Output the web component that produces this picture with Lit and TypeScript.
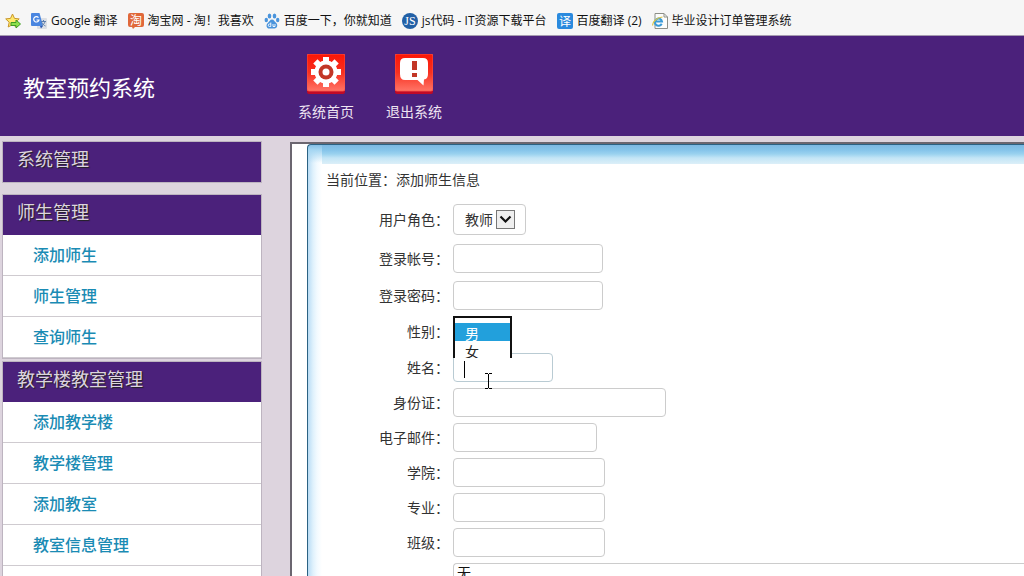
import { LitElement, html, css, svg } from "lit";
import { customElement } from "lit/decorators.js";

const bookmarks = [
  {
    text: "",
    icon: svg`<path d="M7.5 1l2 4.4 4.7.5-3.5 3.3 1 4.8-4.2-2.4L3.200 14l1-4.800L.7 5.900l4.800-.5z" fill="#ffe86a" stroke="#c9962a"/>
      <path d="M6 9.500h5V7l4.500 4-4.500 4v-2.500H6z" fill="#8ee04a" stroke="#3f9a26"/>`,
  },
  {
    text: "Google 翻译",
    icon: svg`<rect x="6" y="5" width="10" height="11" rx="1" fill="#dcdfe4"/>
      <path d="M1 0h7.500L12 13H1a1 1 0 0 1-1-1V1a1 1 0 0 1 1-1z" fill="#4a86e0"/>
      <path d="M7.500 4.600A2.700 2.700 0 1 0 8 7H5.500" fill="none" stroke="#fff" stroke-width="1.200"/>
      <path d="M10 8.500h5M12.500 7v1.500M14 8.500c-.5 2-1.500 3-3.500 4.500M11 9.500c.7 1.500 2 3 3.500 3.500" fill="none" stroke="#5d7fae"/>
      <path d="M9 13h3l-2 2.500z" fill="#2a56b0"/>`,
  },
  {
    text: "淘宝网 - 淘！我喜欢",
    icon: svg`<path d="M2 0h12a2 2 0 0 1 2 2v10a2 2 0 0 1-2 2H7l-2 2-1-2H2a2 2 0 0 1-2-2V2a2 2 0 0 1 2-2z" fill="#e0683a"/>
      <text x="8" y="11.500" font-size="12" text-anchor="middle" fill="#fff">淘</text>`,
  },
  {
    text: "百度一下，你就知道",
    icon: svg`<g fill="#4a94dc"><ellipse cx="5.500" cy="3" rx="1.800" ry="2.500"/><ellipse cx="10.500" cy="3" rx="1.800" ry="2.500"/>
      <ellipse cx="2.300" cy="7" rx="1.700" ry="2.200"/><ellipse cx="13.700" cy="7" rx="1.700" ry="2.200"/>
      <path d="M8 6.500c2 0 2.500 2 4 3.300 2.300 2 1.300 5.700-1.500 5.700-1.500 0-3.500-.2-5 0-3 .2-4-3.500-1.700-5.600C5.500 8.500 6 6.500 8 6.500z"/></g>
      <path d="M6.800 9.500v4H5.500a1.200 1.200 0 0 1 0-2.500h1.300M9 11v2.500h2V11" fill="none" stroke="#fff" stroke-width=".9"/>`,
  },
  {
    text: "js代码 - IT资源下载平台",
    icon: svg`<circle cx="8" cy="8" r="8" fill="#2260a6"/>
      <text x="8" y="12" font-size="12" text-anchor="middle" fill="#fff" font-family="Liberation Serif, serif">JS</text>`,
  },
  {
    text: "百度翻译 (2)",
    icon: svg`<rect width="16" height="16" rx="2" fill="#2a8ade"/>
      <text x="8" y="12.500" font-size="12" text-anchor="middle" fill="#fff">译</text>`,
  },
  {
    text: "毕业设计订单管理系统",
    icon: svg`<path d="M3 .5h9l3.500 3.500v11.500H3z" fill="#fdfdfb" stroke="#8d8f88"/><path d="M12 .5V4h3.500" fill="none" stroke="#8d8f88"/>
      <path d="M9.700 10.800A3.600 3.600 0 1 1 10 8.500H3" fill="none" stroke="#3a9ad8" stroke-width="2"/>
      <path d="M.8 12.500C0 10 4 4.500 10.500 4" fill="none" stroke="#d9c44a" stroke-width="1.200"/>`,
  },
];

const teeth = [0, 45, 90, 135, 180, 225, 270, 315];

const actions = [
  {
    text: "系统首页",
    glyph: svg`${teeth.map((a) => svg`<rect x="16" y="3" width="6" height="8" fill="#fff" transform="rotate(${a} 19 18)"/>`)}
      <circle cx="19" cy="18" r="9" fill="none" stroke="#fff" stroke-width="5"/>
      <circle cx="19" cy="18" r="7.500" fill="#c23626"/><circle cx="19" cy="18" r="3.500" fill="#fff"/>`,
  },
  {
    text: "退出系统",
    glyph: svg`<path d="M10 4h18q5 0 5 5v11q0 5-4 5.500l-.5 6-6-5.500H10q-5 0-5-6V9q0-5 5-5z" fill="#fff"/>
      <path d="M17 7h5v9h-5zM17 19h5v4h-5z" fill="#c23626"/>`,
  },
];

const menus = [
  { title: "系统管理", items: [] as string[] },
  { title: "师生管理", items: ["添加师生", "师生管理", "查询师生"] },
  { title: "教学楼教室管理", items: ["添加教学楼", "教学楼管理", "添加教室", "教室信息管理"] },
];

const fields = [
  { id: "idcard", label: "身份证", size: "xl" },
  { id: "email", label: "电子邮件", size: "m" },
  { id: "college", label: "学院", size: "l" },
  { id: "major", label: "专业", size: "l" },
  { id: "grade", label: "班级", size: "l" },
];

@customElement("app-root")
export class AppRoot extends LitElement {
  static styles = css`
    :host {
      display: flex;
      flex-direction: column;
      height: 100vh;
      overflow: hidden;
      background: #ddd4de;
      font: 14px/20px "Open Sans", "Noto Sans CJK SC", sans-serif;
      color: #333;
    }
    * { box-sizing: border-box; }
    a { text-decoration: none; color: inherit; }
    .bookmarks {
      flex: none;
      display: flex;
      align-items: center;
      gap: 10px;
      height: 36px;
      padding: 6px 5px 0;
      background: #f6f6f6;
      border-bottom: 1px solid #a59bb0;
      font-size: 12px;
      color: #111;
      white-space: nowrap;
    }
    .bookmark { display: flex; align-items: center; gap: 4px; }
    .bookmark svg { width: 16px; height: 16px; flex: none; }
    .header {
      flex: none;
      display: flex;
      height: 100px;
      background: #4b217b;
      color: #fff;
    }
    .brand {
      width: 282px;
      padding: 35px 0 0 23px;
      margin: 0;
      font-size: 22px;
      line-height: 32px;
      font-weight: 400;
    }
    .actions { display: flex; }
    .action {
      width: 88px;
      padding-top: 18px;
      display: flex;
      flex-direction: column;
      align-items: center;
      gap: 8px;
      color: #eee4f2;
    }
    .action svg { width: 38px; height: 40px; }
    .body {
      flex: 1;
      min-height: 0;
      display: grid;
      grid-template-columns: 258px minmax(0, 1fr);
      gap: 29px;
      padding: 6px 0 0 3px;
    }
    .side { display: flex; flex-direction: column; gap: 4px; }
    .panel { background: #fff; box-shadow: 0 0 0 1px #bdb4c0; }
    .panel:last-child { flex: 1; }
    .panel.closed { margin-bottom: 9px; }
    .heading {
      margin: 0;
      height: 40px;
      padding-left: 14px;
      background: #4b217b;
      color: #ddd4de;
      font-size: 18px;
      line-height: 35px;
      font-weight: 400;
      text-shadow: 1px 1px 1px #222;
    }
    .list { list-style: none; margin: 0; padding: 0; }
    .list a {
      display: block;
      height: 41px;
      padding-left: 30px;
      line-height: 41px;
      font-size: 16px;
      font-weight: 500;
      color: #1a8bb4;
      border-bottom: 1px solid #cfcbd0;
    }
    .frame {
      border: solid #6b6670;
      border-width: 2px 0 0 2px;
      background: #fff;
      padding-left: 15px;
      overflow: hidden;
    }
    .sheet {
      height: 100%;
      padding: 25px 0 0 18px;
      border: solid #2b6283;
      border-width: 1px 0 0 1px;
      border-top-left-radius: 4px;
      background:
        linear-gradient(#86bfe6, #a5d6f2 5px, rgba(255, 255, 255, 0) 18px) 0 0 / 14px 19px no-repeat,
        linear-gradient(#7db8e2, #85c4ea 5px, #9ad2ef 9px, #c3e5f6 13px, #dceff8 19px) 14px 0 / 100% 19px no-repeat,
        linear-gradient(90deg, #b9dcf5, #dff1fc 5px, #f2faff 9px, #fff 14px) 0 0 / 14px 100% no-repeat,
        #fff;
    }
    .crumb { margin: 0 0 10px; }
    .row {
      display: grid;
      grid-template-columns: 123px minmax(0, 1fr);
      gap: 4px;
      align-items: center;
      height: 35px;
    }
    .row.tall { height: 40px; }
    .row.mid { height: 37px; }
    .row.list-row { height: 36px; }
    .row.area { height: auto; padding-top: 3px; }
    .row > label { text-align: right; }
    .slot { position: relative; }
    .input {
      display: block;
      height: 29px;
      padding: 0 10px;
      border: 1px solid #ccc;
      border-radius: 4px;
      background: #fff;
      font: inherit;
      color: #333;
      outline: none;
    }
    .s { width: 100px; border-color: #b9cbd3; }
    .m { width: 144px; }
    .n { width: 150px; }
    .l { width: 152px; }
    .xl { width: 213px; }
    .role { position: relative; width: 73px; height: 32px; }
    .role select {
      appearance: none;
      width: 100%;
      height: 31px;
      padding-left: 11px;
    }
    .arrow {
      position: absolute;
      right: 11px;
      top: 6px;
      width: 19px;
      height: 19px;
      pointer-events: none;
    }
    .gender { position: relative; height: 32px; z-index: 1; }
    .gender select {
      appearance: none;
      position: absolute;
      left: 0;
      top: 0;
      width: 59px;
      height: 42px;
      padding: 5px 0 0;
      border: 2px solid #111;
      border-bottom: 0;
      border-radius: 0;
      background: #fff;
      font: inherit;
      overflow: hidden;
      outline: none;
      scrollbar-width: none;
    }
    .gender option {
      height: 18px;
      min-height: 18px;
      line-height: 14px;
      padding: 0 0 0 10px;
      color: #222;
    }
    .gender option:checked {
      background: linear-gradient(#22a0dc, #22a0dc);
      color: #fff;
      -webkit-text-fill-color: #fff;
    }
    .caret {
      position: absolute;
      left: 11px;
      top: 8px;
      width: 1px;
      height: 17px;
      background: #000;
    }
    .pointer { position: absolute; left: 32px; top: 20px; width: 7px; height: 16px; z-index: 2; }
    textarea.input {
      width: 100%;
      height: 90px;
      padding: 0 3px;
      border-right: 0;
      border-radius: 4px 0 0 4px;
      line-height: 18px;
      resize: none;
      color: #111;
    }
  `;

  render() {
    return html`
      <nav class="bookmarks">
        ${bookmarks.map(
          (b) => html`<a class="bookmark" href="#" aria-label=${b.text || "收藏"}>
            <svg viewBox="0 0 16 16">${b.icon}</svg>${b.text ? html`<span>${b.text}</span>` : ""}</a>`
        )}
      </nav>
      <header class="header">
        <h1 class="brand">教室预约系统</h1>
        <nav class="actions">
          ${actions.map(
            (a) => html`<a class="action" href="#">
              <svg viewBox="0 0 38 40">
                <defs><linearGradient id="red" x2="0" y2="1"><stop offset="0" stop-color="#fb1606"/><stop offset=".5" stop-color="#f83020"/><stop offset="1" stop-color="#ff7466"/></linearGradient></defs>
                <rect width="38" height="40" rx="2" fill="#c00a26"/>
                <rect width="38" height="37" rx="2" fill="url(#red)" stroke="#ff5a4c" stroke-width=".8"/>
                ${a.glyph}
              </svg><span>${a.text}</span></a>`
          )}
        </nav>
      </header>
      <div class="body">
        <aside class="side">
          ${menus.map(
            (m) => html`<section class="panel ${m.items.length ? "" : "closed"}">
              <h2 class="heading">${m.title}</h2>
              ${m.items.length
                ? html`<ul class="list">${m.items.map((i) => html`<li><a href="#">${i}</a></li>`)}</ul>`
                : ""}
            </section>`
          )}
        </aside>
        <main class="frame">
          <form class="sheet">
            <p class="crumb">当前位置：添加师生信息</p>
            <div class="row tall">
              <label for="role">用户角色：</label>
              <div class="role">
                <select id="role" class="input"><option>教师</option><option>学生</option></select>
                <svg class="arrow" viewBox="0 0 19 19"><rect x=".5" y=".5" width="18" height="18" fill="#efefef" stroke="#777"/><path d="M4.500 6.500l5 5 5-5" fill="none" stroke="#111" stroke-width="2.200"/></svg>
              </div>
            </div>
            <div class="row mid">
              <label for="account">登录帐号：</label>
              <input id="account" class="input n" type="text" />
            </div>
            <div class="row mid">
              <label for="password">登录密码：</label>
              <input id="password" class="input n" type="password" />
            </div>
            <div class="row list-row">
              <label for="gender">性别：</label>
              <div class="gender">
                <select id="gender" size="2"><option selected>男</option><option>女</option></select>
              </div>
            </div>
            <div class="row">
              <label for="name">姓名：</label>
              <div class="slot">
                <input id="name" class="input s" type="text" />
                <span class="caret"></span>
                <svg class="pointer" viewBox="0 0 7 16"><path d="M0 .5h3M4 .5h3M3.500 1v14M0 15.500h3M4 15.500h3" fill="none" stroke="#000"/></svg>
              </div>
            </div>
            ${fields.map(
              (f) => html`<div class="row">
                <label for=${f.id}>${f.label}：</label>
                <input id=${f.id} class="input ${f.size}" type="text" />
              </div>`
            )}
            <div class="row area">
              <span></span>
              <textarea class="input" aria-label="备注" .value=${"无"}></textarea>
            </div>
          </form>
        </main>
      </div>
    `;
  }
}
